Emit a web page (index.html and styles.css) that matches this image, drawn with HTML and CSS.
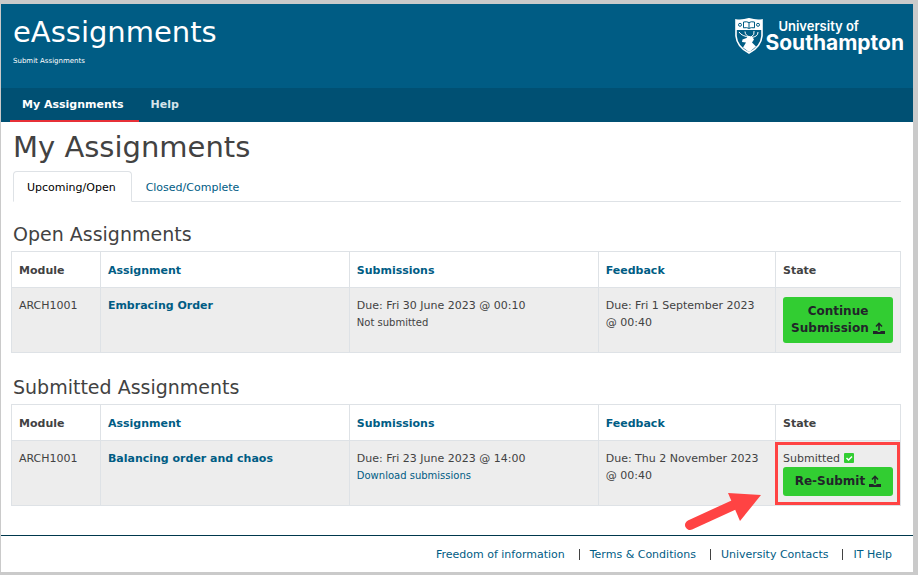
FILE: index.html
```
<!DOCTYPE html>
<html lang="en">
<head>
<meta charset="UTF-8" />
<meta name="viewport" content="width=device-width, initial-scale=1" />
<title>My Assignments - eAssignments</title>
<link rel="stylesheet" href="styles.css">
</head>
<body>
  <svg class="icon-defs" aria-hidden="true">
    <symbol id="icon-upload" viewBox="0 0 12 12">
      <path d="M6 8.500V1.500M3 4.400L6 1.300l3 3.100" fill="none" stroke="currentColor" stroke-width="1.500" />
      <path d="M0 9h4.600v1h2.800V9H12v3H0z" fill="currentColor" />
    </symbol>
  </svg>

  <div class="page">
    <header class="site-header">
      <div>
        <p class="site-title">eAssignments</p>
        <p class="site-tagline">Submit Assignments</p>
      </div>
      <div class="logo">
        <svg class="logo-shield" viewBox="0 0 28 36" aria-hidden="true">
          <path d="M1 2Q7 3 14 0.8Q21 3 27 2V18Q26 29 14 35Q2 29 1 18Z" fill="#005c84" stroke="#fff" stroke-width="1.6" />
          <path d="M1 2Q7 3 14 0.8Q21 3 27 2V12H1Z" fill="#fff" />
          <path d="M8.500 4q3.500-.8 5.500.6q2-1.400 5.500-.6v5.800q-3.500-.6-5.500.6q-2-1.200-5.500-.6zM14 4.600v5.800" fill="none" stroke="#005c84" stroke-width="1" />
          <circle cx="5" cy="6.800" r="1.500" fill="none" stroke="#005c84" stroke-width="1" />
          <circle cx="23" cy="6.800" r="1.500" fill="none" stroke="#005c84" stroke-width="1" />
          <path d="M4 14q3 4.500 11 5M10 13.500q0 4 5 5.500M23 14q0 5-7 5.500M19 13q1 4-3 6" fill="none" stroke="#fff" stroke-width="1" />
          <path d="M13 18l4 .5l2 3l-2 3l4 4l-6 5l-1 .5l-6-4.500l3-5l-4-.5l.5-2.500l4-1.500z" fill="#fff" />
        </svg>
        <div class="logo-name">
          <span class="logo-small">University of</span>
          <span class="logo-large">Southampton</span>
        </div>
      </div>
    </header>

    <nav class="main-nav">
      <a class="active" href="#">My Assignments</a>
      <a href="#">Help</a>
    </nav>

    <main>
      <h1>My Assignments</h1>

      <div class="tabs">
        <a class="tab active" href="#">Upcoming/Open</a>
        <a class="tab" href="#">Closed/Complete</a>
      </div>

      <h2>Open Assignments</h2>
      <table>
        <thead>
          <tr>
            <th class="col-module">Module</th>
            <th class="col-assignment"><a href="#">Assignment</a></th>
            <th class="col-submissions"><a href="#">Submissions</a></th>
            <th><a href="#">Feedback</a></th>
            <th class="col-state">State</th>
          </tr>
        </thead>
        <tbody>
          <tr>
            <td>ARCH1001</td>
            <td><a class="name" href="#">Embracing Order</a></td>
            <td>Due: Fri 30 June 2023 @ 00:10<br><small>Not submitted</small></td>
            <td>Due: Fri 1 September 2023 @ 00:40</td>
            <td>
              <button type="button" class="btn">Continue Submission <svg class="icon"><use href="#icon-upload" /></svg></button>
            </td>
          </tr>
        </tbody>
      </table>

      <h2>Submitted Assignments</h2>
      <table>
        <thead>
          <tr>
            <th class="col-module">Module</th>
            <th class="col-assignment"><a href="#">Assignment</a></th>
            <th class="col-submissions"><a href="#">Submissions</a></th>
            <th><a href="#">Feedback</a></th>
            <th class="col-state">State</th>
          </tr>
        </thead>
        <tbody>
          <tr>
            <td>ARCH1001</td>
            <td><a class="name" href="#">Balancing order and chaos</a></td>
            <td>Due: Fri 23 June 2023 @ 14:00<br><small><a href="#">Download submissions</a></small></td>
            <td>Due: Thu 2 November 2023 @ 00:40</td>
            <td class="highlighted">
              Submitted
              <svg class="check" viewBox="0 0 10 10"><rect width="10" height="10" rx="1" fill="#32cd32" /><path d="M2.500 5l2 2l3.500-3.500" fill="none" stroke="#fff" stroke-width="1.500" /></svg>
              <button type="button" class="btn">Re-Submit <svg class="icon"><use href="#icon-upload" /></svg></button>
              <span class="highlight-box"></span>
              <svg class="arrow" viewBox="0 0 78 40" aria-hidden="true">
                <path d="M6 34L54 12" stroke="#ff4343" stroke-width="10" stroke-linecap="round" />
                <path d="M44 2L77 4L56 30Z" fill="#ff4343" />
              </svg>
            </td>
          </tr>
        </tbody>
      </table>
    </main>

    <footer>
      <a href="#">Freedom of information</a>
      <a href="#">Terms &amp; Conditions</a>
      <a href="#">University Contacts</a>
      <a href="#">IT Help</a>
    </footer>
  </div>
</body>
</html>
```
FILE: styles.css
```
* {
  box-sizing: border-box;
}
body {
  font-family: Verdana, "DejaVu Sans", sans-serif;
  font-size: 11px;
  line-height: 17px;
  color: #424242;
  background: #cacaca;
  margin: 0;
  padding: 4px 5px 4px 1px;
  min-height: 100vh;
}

a {
  color: #005c84;
  text-decoration: none;
}

p {
  margin: 0;
}

.icon-defs {
  position: absolute;
  width: 0;
  height: 0;
}

.page {
  background: white;
}

.site-header {
  display: flex;
  justify-content: space-between;
  align-items: flex-start;
  min-height: 84px;
  padding: 10px 9px 0 12px;
  background: #005c84;
  color: white;
}

.site-title {
  font-size: 29px;
  line-height: 36px;
}

.site-tagline {
  margin-top: 4px;
  font-size: 7px;
  line-height: 14px;
}

.logo {
  display: flex;
  align-items: center;
  padding-top: 4px;
}

.logo-shield {
  width: 28px;
  height: 36px;
}

.logo-name {
  display: flex;
  flex-direction: column;
  padding-left: 2px;
  font-family: Inter, sans-serif;
}

.logo-small {
  padding-left: 13px;
  font-size: 13px;
  font-weight: 600;
  line-height: 14px;
}

.logo-large {
  font-size: 21px;
  font-weight: 700;
  line-height: 20px;
}

.main-nav {
  display: flex;
  padding-left: 9px;
  background: #005073;
}

.main-nav a {
  padding: 8px 15px 7px 12px;
  border-bottom: 2px solid transparent;
  color: #d5e3ea;
  font-weight: 700;
}

.main-nav a.active {
  color: white;
  border-color: #e73037;
}

main {
  padding: 8px 12px 0 10px;
}

h1 {
  margin: 0 0 6px 2px;
  font-size: 29px;
  font-weight: 400;
  line-height: 35px;
}

.tabs {
  display: flex;
  margin-left: 2px;
  border-bottom: 1px solid #dee2e6;
}

.tab {
  padding: 7px 15px 4px 13px;
  border: 1px solid transparent;
}

.tab.active {
  margin-bottom: -1px;
  color: black;
  background: white;
  border-color: #dee2e6;
  border-bottom-color: white;
  border-radius: 4px 4px 0 0;
}

h2 {
  margin: 20px 0 5px 2px;
  font-size: 19px;
  font-weight: 400;
  line-height: 24px;
}

table + h2 {
  margin-top: 22px;
}

table {
  width: 100%;
  table-layout: fixed;
  border-collapse: collapse;
}

th, td {
  border: 1px solid #dee2e6;
  text-align: left;
  vertical-align: top;
}

th {
  padding: 10px 7px 8px;
}

td {
  height: 65px;
  padding: 9px 7px;
  background: #ededed;
}

.col-module {
  width: 10%;
}

.col-assignment {
  width: 28%;
}

.col-submissions {
  width: 28%;
}

.col-state {
  width: 125px;
}

.name {
  font-weight: 700;
}

small {
  font-size: 10px;
}

.btn {
  display: block;
  width: 100%;
  padding: 6px;
  border: none;
  border-radius: 3px;
  background: #32cd32;
  color: #212529;
  font: inherit;
  font-size: 12px;
  font-weight: 700;
  cursor: pointer;
}

.icon {
  width: 12px;
  height: 12px;
  vertical-align: -2px;
}

.check {
  width: 10px;
  height: 10px;
  vertical-align: -1px;
}

/* callout drawn over the re-submit cell */
.highlighted {
  position: relative;
}

.highlight-box {
  position: absolute;
  inset: 1px 0 0 -1px;
  border: 3px solid #ff4343;
}

.arrow {
  position: absolute;
  right: 138px;
  bottom: -26px;
  width: 78px;
  height: 40px;
}

footer {
  display: flex;
  justify-content: flex-end;
  margin-top: 29px;
  padding: 13px 21px 12px;
  border-top: 1px solid #00384d;
  line-height: 11px;
}

footer a + a {
  margin-left: 14px;
  padding-left: 10px;
  border-left: 1px solid #424242;
}
```
